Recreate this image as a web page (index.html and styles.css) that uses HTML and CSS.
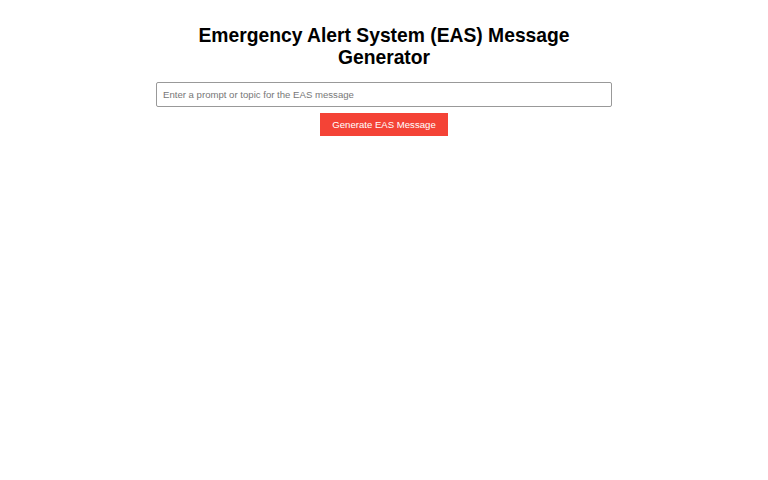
FILE: index.html
```html
<!DOCTYPE html>
<html lang="en">
  <head>
    <meta charset="UTF-8" />
    <meta name="viewport" content="width=device-width, initial-scale=1.0" />
    <title>EAS Message Generator</title>
    <link rel="stylesheet" href="styles.css">
  </head>
  <body>
    <div class="container">
      <h1>Emergency Alert System (EAS) Message Generator</h1>
      <input type="text" id="prompt" placeholder="Enter a prompt or topic for the EAS message" />
      <button id="generate">Generate EAS Message</button>
      <div id="output"></div>
    </div>
  </body>
</html>
```

FILE: styles.css
```css
body {
  font-family: "Liberation Sans", Arial, sans-serif;
  background-color: white;
  margin: 0;
  padding: 16px;
}
.container {
  width: 456px;
  margin: 0 auto;
  display: flex;
  flex-direction: column;
  align-items: center;
}
h1 {
  font-size: 19.3px;
  text-align: center;
  margin: 9px 0 13px;
}
input {
  box-sizing: border-box;
  width: 100%;
  height: 25px;
  padding: 0 6px;
  font-family: inherit;
  font-size: 9.6px;
  border: 1px solid #999;
  border-radius: 2px;
}
input::placeholder {
  color: #777;
}
button {
  margin-top: 6px;
  height: 23px;
  padding: 0 12px;
  font-family: inherit;
  font-size: 9.6px;
  color: white;
  background-color: #f44336;
  border: none;
}
```
